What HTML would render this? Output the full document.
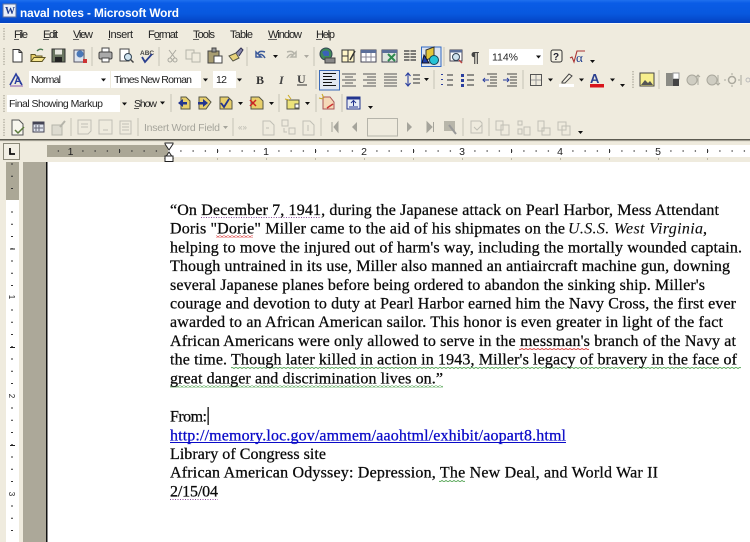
<!DOCTYPE html>
<html><head><meta charset="utf-8"><title>naval notes - Microsoft Word</title>
<style>
html,body{margin:0;padding:0;background:#efebde;overflow:hidden}
svg{display:block;position:absolute;left:0;top:0;filter:blur(.35px)}
.d{font-family:"Liberation Serif",serif;font-size:16px;fill:#0a0a0a;stroke:#0a0a0a;stroke-width:.28px}
.u{font-family:"Liberation Sans",sans-serif;font-size:11px;fill:#222}
.g{fill:#a8a79f}
.r{font-family:"Liberation Sans",sans-serif;font-size:10.5px;fill:#222}
.s{stroke:#c6c3b6;stroke-width:1}
</style></head><body>
<svg width="750" height="542" viewBox="0 0 750 542" xmlns="http://www.w3.org/2000/svg">
<defs>
<linearGradient id="tb" x1="0" y1="0" x2="0" y2="1"><stop offset="0" stop-color="#1f70ee"/><stop offset=".14" stop-color="#0a5ce6"/><stop offset=".6" stop-color="#0858de"/><stop offset="1" stop-color="#0342c2"/></linearGradient>
<pattern id="gw" width="4" height="2" patternUnits="userSpaceOnUse"><path d="M0 2L2 .4L4 2" fill="none" stroke="#5aa85a" stroke-width=".9"/></pattern>
<pattern id="rw" width="4" height="2" patternUnits="userSpaceOnUse"><path d="M0 2L2 .4L4 2" fill="none" stroke="#d44" stroke-width=".9"/></pattern>
<path id="ar" d="M0 0h5l-2.5 3z" fill="#111"/>
</defs>

<rect width="750" height="542" fill="#efebde"/>
<!-- title bar -->
<rect width="750" height="23" fill="url(#tb)"/>
<rect y="23" width="750" height="1" fill="#fbfaf5"/>
<rect x="3" y="4" width="13" height="13" fill="#e9eef8" stroke="#5c6f9c"/>
<text x="5" y="14" font-family="Liberation Serif,serif" font-size="10" font-weight="bold" fill="#1c3a8a">W</text>
<text x="20" y="17" font-family="Liberation Sans,sans-serif" font-size="11.8" font-weight="bold" fill="#fff" textLength="159" lengthAdjust="spacing">naval notes - Microsoft Word</text>

<!-- grippers -->
<g stroke="#b9b6a8" stroke-width="1.6" stroke-dasharray="1.4 1.2" fill="none">
<path d="M4 28V41M4 48V65M4 71V88M4 95V112M4 119V136M633 71V88"/>
</g>

<!-- menu -->
<g class="u">
<text x="14" y="38" textLength="14">File</text>
<text x="43" y="38" textLength="15">Edit</text>
<text x="73" y="38" textLength="20">View</text>
<text x="108" y="38" textLength="25">Insert</text>
<text x="148" y="38" textLength="30">Format</text>
<text x="193" y="38" textLength="22">Tools</text>
<text x="230" y="38" textLength="23">Table</text>
<text x="268" y="38" textLength="34">Window</text>
<text x="316" y="38" textLength="19">Help</text>
</g>
<path d="M14 39.5h5M43 39.5h6M73 39.5h6M108 39.5h2M155 39.5h6M193 39.5h6M268 39.5h9M316 39.5h6" stroke="#333" stroke-width=".8"/>

<!-- separators -->
<g class="s" fill="none">
<path d="M92 47V66M159 47V66M247 47V66M314 47V66M444 47V66"/>
<path d="M316 70V89M434 70V89M523 70V89M659 70V89"/>
<path d="M171 94V112M279 94V112M316 94V112M342 94V112"/>
<path d="M71 118V136M138 118V136M233 118V136M321 118V136M463 118V136M489 118V136"/>
</g>

<!-- ROW 1 -->
<path d="M13 49.5h6l3 3v9.5H13z" fill="#fff" stroke="#333"/><path d="M19 49.5v3h3" fill="none" stroke="#333"/>
<path d="M31 61.5v-7h4l1 1.5h6v5.500z" fill="#e8cf6a" stroke="#5d5320"/><path d="M31 61.500l3-4h11l-3 4z" fill="#f6e58d" stroke="#5d5320"/><path d="M37 51q3-3 6-1" fill="none" stroke="#4a7a50" stroke-width="1.400"/>
<rect x="52" y="49" width="13" height="13" fill="#6a7560" stroke="#333"/><rect x="55" y="49.500" width="7" height="5" fill="#e8e8e0"/><rect x="55" y="57" width="7" height="5" fill="#222"/>
<rect x="74" y="50" width="10" height="12" fill="#dfe5ee" stroke="#556"/><circle cx="80" cy="54" r="3.500" fill="#4a78b8"/><rect x="83" y="59" width="4" height="4" fill="#c33"/>
<rect x="99" y="52" width="13" height="7" rx="1.500" fill="#aaa" stroke="#444"/><rect x="102" y="48" width="7" height="4" fill="#fff" stroke="#444"/><rect x="102" y="58" width="7" height="4" fill="#fff" stroke="#444"/>
<rect x="120" y="49" width="9" height="12" fill="#fff" stroke="#444"/><circle cx="128" cy="57" r="3.500" fill="#cfe3ef" stroke="#345"/><path d="M130.500 59.500l3 3" stroke="#444" stroke-width="1.500"/>
<text x="140" y="55" font-family="Liberation Sans,sans-serif" font-size="6.500" font-weight="bold" fill="#444">ABC</text><path d="M142 57l3 5 7-8" fill="none" stroke="#2a3f8f" stroke-width="1.800"/>
<path d="M169 50l6 8M176 50l-6 8" stroke="#a9a89f" fill="none"/><circle cx="170" cy="60" r="2" fill="none" stroke="#a9a89f"/><circle cx="175" cy="60" r="2" fill="none" stroke="#a9a89f"/>
<rect x="186" y="50" width="8" height="9" fill="#efebde" stroke="#b5b4aa"/><rect x="192" y="53" width="8" height="9" fill="#efebde" stroke="#b5b4aa"/>
<rect x="208" y="51" width="11" height="12" fill="#a89d72" stroke="#444"/><rect x="212" y="48" width="4" height="4" fill="#999" stroke="#444"/><rect x="214" y="56" width="8" height="7" fill="#fff" stroke="#444"/>
<path d="M229 56l7-3 3 5-6 3z" fill="#e8d27a" stroke="#554"/><path d="M236 53l5-5 2 2-4 6" fill="#88a" stroke="#335"/>
<path d="M265 52q-6-2-7 2l-2-2v5h5l-2-2q3-2 6 3" fill="none" stroke="#3b5a9a" stroke-width="1.500"/><use href="#ar" x="273" y="55"/>
<path d="M287 52q6-2 7 2l2-2v5h-5l2-2q-3-2-6 3" fill="none" stroke="#b5b4aa" stroke-width="1.500"/><use href="#ar" x="304" y="55" opacity=".3"/>
<circle cx="326" cy="54" r="6" fill="#3f8a5a" stroke="#345"/><path d="M322 52q4-3 7 0v4h-5z" fill="#3a62b8"/><rect x="325" y="58" width="10" height="5" fill="#888" stroke="#444"/>
<rect x="342" y="50" width="12" height="12" fill="#fff6c8" stroke="#333"/><path d="M348 50v12M342 56h6" stroke="#333" fill="none"/><path d="M350 60l5-9" stroke="#333" stroke-width="1.500"/>
<rect x="361" y="50" width="15" height="12" fill="#fff" stroke="#445"/><rect x="361" y="50" width="15" height="3" fill="#5b6f9a"/><path d="M366 53v9M371 53v9M361 57h15" stroke="#889"/>
<rect x="382" y="50" width="15" height="12" fill="#dfe6df" stroke="#445"/><rect x="382" y="50" width="15" height="3" fill="#5b6f9a"/><path d="M388 54l7 7M395 54l-7 7" stroke="#2f8a4f" stroke-width="2"/>
<path d="M404 51h12M404 54h12M404 57h12M404 60h12" stroke="#555" stroke-width="1.400"/><path d="M410 50v12" stroke="#efebde"/>
<rect x="421.500" y="47" width="19.500" height="19.500" fill="#dde4f0" stroke="#316ac5"/>
<path d="M426 50l8-3v10l-8 3z" fill="#e3c63a" stroke="#333"/><path d="M424 55l5 8h-7z" fill="#1e3fa8" stroke="#112"/><circle cx="434" cy="60" r="4.500" fill="#27c4d6" stroke="#145"/>
<rect x="450" y="50" width="12" height="11" fill="#fff" stroke="#445"/><rect x="450" y="50" width="12" height="2.500" fill="#5b6f9a"/><circle cx="456" cy="57" r="3.500" fill="#cfe3ef" stroke="#345"/><path d="M459 60l3 3" stroke="#b44" stroke-width="1.500"/>
<text x="471" y="62" font-family="Liberation Sans,sans-serif" font-size="15" font-weight="bold" fill="#444">¶</text>
<rect x="489" y="49" width="54" height="16" fill="#fff"/><text x="492" y="60.500" class="r" textLength="26">114%</text><use href="#ar" x="536" y="55.500"/>
<rect x="551" y="50" width="11" height="12" rx="2" fill="#f4f1e4" stroke="#333"/><text x="553" y="60" font-family="Liberation Sans,sans-serif" font-size="10" font-weight="bold" fill="#223">?</text>
<path d="M570 58l2-1 2 5 3-11h8" fill="none" stroke="#a33" stroke-width="1.100"/><text x="576" y="62" font-family="Liberation Serif,serif" font-size="13" fill="#23408f">α</text><use href="#ar" x="590" y="60"/>

<!-- ROW 2 -->
<path d="M10 85l6-11 6 11" fill="none" stroke="#2a3f9f" stroke-width="1.600"/><text x="14" y="84" font-family="Liberation Sans,sans-serif" font-size="11" font-weight="bold" fill="#2a3f9f">A</text><path d="M10 86h13" stroke="#8a5ab0"/>
<rect x="29" y="71" width="81" height="17" fill="#fff"/><text x="31" y="83" class="r" textLength="30">Normal</text><use href="#ar" x="101" y="78.500"/>
<rect x="111" y="71" width="90" height="17" fill="#fff"/><text x="114" y="83" class="r" textLength="78">Times New Roman</text><use href="#ar" x="203" y="78.500"/>
<rect x="213" y="71" width="23" height="17" fill="#fff"/><text x="216" y="83" class="r" textLength="11">12</text><use href="#ar" x="237" y="78.500"/>
<text x="256" y="84" font-family="Liberation Serif,serif" font-size="12" font-weight="bold" fill="#333">B</text>
<text x="279" y="84" font-family="Liberation Serif,serif" font-size="12" font-weight="bold" font-style="italic" fill="#444">I</text>
<text x="297" y="83" font-family="Liberation Serif,serif" font-size="12" font-weight="bold" fill="#444">U</text><path d="M297 85h10" stroke="#333"/>
<rect x="319.500" y="70.500" width="20" height="19.500" fill="#e2e8f2" stroke="#3a6ab8"/>
<path d="M323 74h13M323 77h9M323 80h13M323 83h9M323 86h13" stroke="#111" stroke-width="1.100" transform="translate(0 -.5)"/>
<path d="M342 74h14M345 77h8M342 80h14M345 83h8M342 86h14" stroke="#555" stroke-width="1.100"/>
<path d="M363 74h13M367 77h9M363 80h13M367 83h9M363 86h13" stroke="#555" stroke-width="1.100"/>
<path d="M384 74h13M384 77h13M384 80h13M384 83h13M384 86h13" stroke="#555" stroke-width="1.100"/>
<path d="M408 74v11M405.500 76l2.500-3 2.500 3M405.500 83l2.500 3 2.500-3" fill="none" stroke="#2a3f9f" stroke-width="1.100"/><path d="M413 75h7M413 79h7M413 83h7" stroke="#555" stroke-width="1.200"/><use href="#ar" x="424" y="78"/>
<path d="M442 74v1M442 79v1M442 84v1" stroke="#2a3f9f" stroke-width="2"/><path d="M447 75h6M447 80h6M447 85h6" stroke="#555" stroke-width="1.300"/>
<rect x="461" y="74" width="3" height="3" fill="#2a3f9f"/><rect x="461" y="79" width="3" height="3" fill="#2a3f9f"/><rect x="461" y="84" width="3" height="3" fill="#2a3f9f"/><path d="M467 75h7M467 80h7M467 85h7" stroke="#555" stroke-width="1.300"/>
<path d="M487 74h10M490 77h7M490 80h7M490 83h7M487 86h10" stroke="#444" stroke-width="1.100"/><path d="M489 80h-6M485 78l-2 2 2 2" fill="none" stroke="#2a3f9f"/>
<path d="M507 74h10M510 77h7M510 80h7M510 83h7M507 86h10" stroke="#444" stroke-width="1.100"/><path d="M503 80h6M507 78l2 2-2 2" fill="none" stroke="#2a3f9f"/>
<rect x="530.500" y="74.500" width="11" height="11" fill="none" stroke="#555"/><path d="M536 75v10M531 80h10" stroke="#999"/><use href="#ar" x="548" y="78.500"/>
<rect x="559" y="84" width="15" height="3" fill="#fff"/><path d="M562 82l7-8 3 2-7 7h-3z" fill="#f4f1e4" stroke="#444"/><use href="#ar" x="579" y="78.500"/>
<text x="590" y="83" font-family="Liberation Sans,sans-serif" font-size="13" font-weight="bold" fill="#2a3f8f">A</text><rect x="590" y="84" width="14" height="3.500" fill="#d8141c"/><use href="#ar" x="610" y="78.500"/>
<use href="#ar" x="620" y="84"/>
<rect x="640" y="73" width="14" height="13" fill="#f7ef8d" stroke="#444"/><path d="M641 85l4-5 3 3 2-2 3 4z" fill="#555"/>
<rect x="666" y="73" width="7" height="13" fill="#8b8b85"/><rect x="673" y="73" width="6" height="6" fill="#fff" stroke="#999"/><rect x="673" y="79" width="6" height="7" fill="#444"/>
<circle cx="692" cy="80" r="5" fill="#cfcdc2" stroke="#aaa89d"/><path d="M698 85v-10M696 77l2-2 2 2" fill="none" stroke="#aaa89d"/>
<circle cx="712" cy="80" r="5" fill="#cfcdc2" stroke="#aaa89d"/><path d="M718 75v10M716 83l2 2 2-2" fill="none" stroke="#aaa89d"/>
<circle cx="732" cy="80" r="3.500" fill="none" stroke="#aaa89d" stroke-width="1.500"/><path d="M732 73v2M732 85v2M726 80h-2M738 80h2M741 75v10" stroke="#aaa89d"/>
<circle cx="748" cy="80" r="2" fill="none" stroke="#bbb"/>

<!-- ROW 3 -->
<rect x="7" y="95" width="113" height="17" fill="#fff"/><text x="9" y="107" class="r" textLength="94">Final Showing Markup</text><use href="#ar" x="122" y="102.500"/>
<text x="134" y="107" class="r" textLength="23">Show</text><path d="M134 108.500h5" stroke="#333" stroke-width=".8"/><use href="#ar" x="160" y="101.500"/>
<path d="M181 97h5l4 4v8h-9z" fill="#e8cf6a" stroke="#554"/><path d="M178 103l5-4v8z" fill="#23358f"/><rect x="182" y="102" width="5" height="2.500" fill="#23358f"/>
<path d="M199 97h7l5 5-5 7h-7z" fill="#e8cf6a" stroke="#554"/><path d="M208 103l-5-4v8z" fill="#23358f"/><rect x="198" y="102" width="5" height="2.500" fill="#23358f"/>
<path d="M220 97h8l4 4v8h-12z" fill="#e8cf6a" stroke="#554"/><path d="M221 103l3 4 5-8" fill="none" stroke="#23358f" stroke-width="1.800"/><use href="#ar" x="238" y="102"/>
<path d="M251 97h8l4 4v8h-12z" fill="#e8cf6a" stroke="#554"/><path d="M250 100l6 6M256 100l-6 6" stroke="#c22" stroke-width="1.500"/><use href="#ar" x="269" y="102"/>
<rect x="287" y="100" width="12" height="9" fill="#ece27a" stroke="#554"/><path d="M288 95l3 4M285 99l4 1" stroke="#c9a820"/><rect x="295" y="104" width="4" height="4" fill="#fff" stroke="#555"/><use href="#ar" x="305" y="102"/>
<path d="M323 97h7l4 5v7h-11z" fill="#f5d9b8" stroke="#a55"/><path d="M322 94l2 4M319 98l4 1" stroke="#c9a820"/><path d="M327 108l6-4" stroke="#c33" stroke-width="1.500"/>
<rect x="347" y="97" width="13" height="12" fill="#e8edf6" stroke="#23358f"/><rect x="347" y="97" width="13" height="2.500" fill="#23358f"/><path d="M353.500 106v-5M351 103l2.500-2.500 2.500 2.500M349 107h9" fill="none" stroke="#23358f"/>
<use href="#ar" x="368" y="106"/>

<!-- ROW 4 -->
<path d="M12 120h7l4 4v11H12z" fill="#f8f6ee" stroke="#555"/><path d="M15 130l3 3 6-6" fill="none" stroke="#5a7a3a" stroke-width="1.500"/>
<rect x="33" y="122" width="11" height="10" fill="#dfe4ee" stroke="#445"/><rect x="33" y="122" width="11" height="2.500" fill="#445"/><path d="M36 125v6M39 125v6M34 128h9" stroke="#667"/>
<rect x="52" y="125" width="10" height="10" fill="#dddbd0" stroke="#b5b4aa"/><path d="M60 127l5-6" stroke="#b5b4aa" stroke-width="2"/>
<g fill="none" stroke="#c0bfb5">
<path d="M78 120h13v11l-3 3H78zM81 124h7M81 127h7"/>
<path d="M99 120h13v14H99zM103 130h5"/>
<path d="M120 121h11v13h-11zM122 124h7M122 127h7M122 130h7"/>
<path d="M263 121h7l4 4v10h-11zM266 128h3"/>
<path d="M282 120h6v6h-6zM289 128h6v6h-6zM284 128v4h3"/>
<path d="M303 121h7l4 4v10h-11zM308 125v6"/>
<path d="M471 121h9l2 2v10h-11zM474 127l3 3 5-5"/>
<path d="M496 121h7v9h-7zM501 125h8v10h-8z"/>
<path d="M518 121h4v4h-4zM518 129h4v5h-4zM524 127h6v8h-6z"/>
<path d="M538 121h6v10h-6zM542 128h8v7h-8z"/>
<path d="M558 122h8v8h-8zM562 126h8v9h-8z"/>
</g>
<text x="144" y="131" font-family="Liberation Sans,sans-serif" font-size="10.5" fill="#a5a49b" textLength="76">Insert Word Field</text><path d="M223 126h5l-2.500 3z" fill="#a5a49b"/>
<text x="238" y="130" font-family="Liberation Sans,sans-serif" font-size="8" fill="#b5b4aa">«»</text>
<path d="M332 122v10M338 122v10l-4-5z" fill="#a5a49b" stroke="#a5a49b"/>
<path d="M357 122v10l-5-5z" fill="#a5a49b"/>
<rect x="367.500" y="118.500" width="30" height="17.500" fill="none" stroke="#b5b4aa"/>
<path d="M407 122v10l5-5z" fill="#a5a49b"/>
<path d="M427 122v10l5-5zM433.500 122v10" fill="#a5a49b" stroke="#a5a49b"/>
<rect x="444" y="121" width="11" height="10" fill="#b8b6aa"/><path d="M449 125l7 9" stroke="#999" stroke-width="2"/>
<use href="#ar" x="578" y="131"/>

<!-- dark line -->
<rect y="139" width="750" height="1.500" fill="#5c5a50"/>
<rect y="140.500" width="750" height="1.500" fill="#e6e2d4"/>

<!-- h ruler -->
<rect x="3.500" y="143.500" width="16" height="16" fill="#f2efe4" stroke="#8a8878"/>
<path d="M10 148v6h5" fill="none" stroke="#111" stroke-width="1.800"/>
<rect x="47" y="145" width="703" height="12" fill="#fff"/>
<rect x="47" y="145" width="121" height="12" fill="#aba796"/>
<g stroke="#333" stroke-width="1.300">
<line x1="57.750" y1="151" x2="168" y2="151" stroke-dasharray="1.300 10.950"/>
<line x1="180.250" y1="151" x2="750" y2="151" stroke-dasharray="1.300 10.950"/>
</g>
<path d="M119.500 149v4M217.500 149v4M315.500 149v4M413.500 149v4M511.500 149v4M609.500 149v4M707.500 149v4" stroke="#333"/>
<path d="M217.500 158v2M315.500 158v2M413.500 158v2M511.500 158v2M609.500 158v2M707.500 158v2M266.500 158v2M364.500 158v2M462.500 158v2M560.500 158v2M658.500 158v2" stroke="#bdb9a9"/>
<g class="r" text-anchor="middle">
<rect x="64" y="146" width="12" height="10" fill="#aba796"/><text x="70.500" y="155">1</text>
<rect x="260" y="146" width="12" height="10" fill="#fff"/><text x="266" y="155">1</text>
<rect x="358" y="146" width="12" height="10" fill="#fff"/><text x="364" y="155">2</text>
<rect x="456" y="146" width="12" height="10" fill="#fff"/><text x="462" y="155">3</text>
<rect x="554" y="146" width="12" height="10" fill="#fff"/><text x="560" y="155">4</text>
<rect x="652" y="146" width="12" height="10" fill="#fff"/><text x="658" y="155">5</text>
</g>
<path d="M165 143h8v1l-4 6-4-6z" fill="#fff" stroke="#222"/><path d="M165 158l4-6 4 6z" fill="#fff" stroke="#222"/><rect x="165" y="156" width="8" height="5.500" fill="#fff" stroke="#222"/>

<!-- doc area -->
<rect x="0" y="162" width="750" height="380" fill="#efebde"/>
<rect x="23" y="162" width="23" height="380" fill="#aca899"/>
<rect x="46" y="162" width="1.500" height="380" fill="#111"/>
<rect x="47.500" y="162" width="702.500" height="380" fill="#fff"/>

<!-- v ruler -->
<rect x="6" y="162" width="13" height="38" fill="#aba796"/>
<rect x="6" y="200" width="13" height="342" fill="#fff"/>
<line x1="12" y1="163.500" x2="12" y2="200" stroke="#333" stroke-width="2" stroke-dasharray="1 11.250"/>
<line x1="12" y1="211.500" x2="12" y2="542" stroke="#333" stroke-width="2" stroke-dasharray="1 11.250"/>
<path d="M10 249h5M10 347.500h5M10 445.500h5" stroke="#222"/>
<rect x="8" y="294" width="8" height="6" fill="#fff"/><text transform="translate(9 297) rotate(90)" font-family="Liberation Sans,sans-serif" font-size="8" fill="#222" text-anchor="middle">1</text>
<rect x="8" y="392" width="8" height="8" fill="#fff"/><text transform="translate(9 396) rotate(90)" font-family="Liberation Sans,sans-serif" font-size="8" fill="#222" text-anchor="middle">2</text>
<rect x="8" y="490" width="8" height="8" fill="#fff"/><text transform="translate(9 494) rotate(90)" font-family="Liberation Sans,sans-serif" font-size="8" fill="#222" text-anchor="middle">3</text>

<!-- squiggles -->
<path d="M201 217.500H320M170 499.500H218" stroke="#8a4a9a" stroke-width="1" stroke-dasharray="1 1.500"/>
<rect x="216" y="235.500" width="37" height="2" fill="url(#rw)"/>
<rect x="519" y="348" width="70" height="2" fill="url(#rw)"/>
<rect x="231" y="367" width="510" height="2" fill="url(#gw)"/>
<rect x="170" y="385.500" width="273" height="2" fill="url(#gw)"/>
<rect x="439" y="480" width="26" height="2" fill="url(#gw)"/>

<!-- body text -->
<g class="d">
<text x="170" y="215" textLength="549" lengthAdjust="spacing">“On December 7, 1941, during the Japanese attack on Pearl Harbor, Mess Attendant</text>
<text x="170" y="233.700" textLength="395" lengthAdjust="spacing">Doris "Dorie" Miller came to the aid of his shipmates on the</text>
<text x="568" y="233.700" font-style="italic" style="stroke-width:.08px" textLength="135" lengthAdjust="spacing">U.S.S. West Virginia</text>
<text x="703" y="233.700">,</text>
<text x="170" y="252.400" textLength="572" lengthAdjust="spacing">helping to move the injured out of harm's way, including the mortally wounded captain.</text>
<text x="170" y="271.100" textLength="560" lengthAdjust="spacing">Though untrained in its use, Miller also manned an antiaircraft machine gun, downing</text>
<text x="170" y="289.800" textLength="535" lengthAdjust="spacing">several Japanese planes before being ordered to abandon the sinking ship. Miller's</text>
<text x="170" y="308.500" textLength="566" lengthAdjust="spacing">courage and devotion to duty at Pearl Harbor earned him the Navy Cross, the first ever</text>
<text x="170" y="327.200" textLength="553" lengthAdjust="spacing">awarded to an African American sailor. This honor is even greater in light of the fact</text>
<text x="170" y="345.900" textLength="566" lengthAdjust="spacing">African Americans were only allowed to serve in the messman's branch of the Navy at</text>
<text x="170" y="364.600" textLength="567" lengthAdjust="spacing">the time. Though later killed in action in 1943, Miller's legacy of bravery in the face of</text>
<text x="170" y="383.300" textLength="273" lengthAdjust="spacing">great danger and discrimination lives on.”</text>
<text x="170" y="421.500" textLength="37" lengthAdjust="spacing">From:</text>
<text x="170" y="440.300" textLength="396" lengthAdjust="spacing" style="fill:#0a0ac8;stroke:#0a0ac8">http://memory.loc.gov/ammem/aaohtml/exhibit/aopart8.html</text>
<text x="170" y="459" textLength="156" lengthAdjust="spacing">Library of Congress site</text>
<text x="170" y="477.700" textLength="488" lengthAdjust="spacing">African American Odyssey: Depression, The New Deal, and World War II</text>
<text x="170" y="496.500" textLength="48" lengthAdjust="spacing">2/15/04</text>
</g>
<rect x="170" y="442" width="396" height="1" fill="#0a0ac8"/>
<rect x="207.500" y="407" width="1.300" height="18" fill="#111"/>
</svg>
</body></html>
